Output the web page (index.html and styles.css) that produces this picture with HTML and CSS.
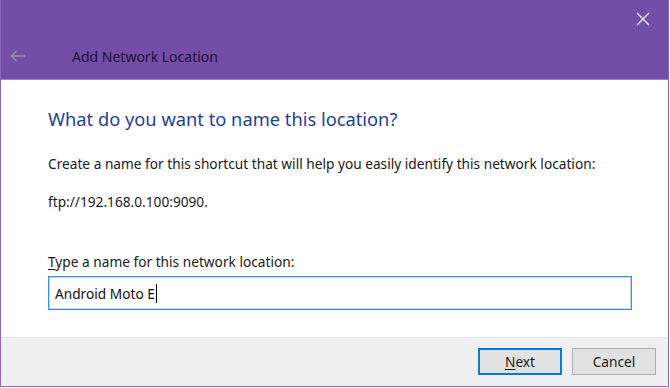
FILE: index.html
```html
<!DOCTYPE html>
<html>
<head>
<meta charset="utf-8">
<link rel="stylesheet" href="styles.css">
</head>
<body>
<div class="window">
  <div class="titlebar">
    <div class="close-row">
      <span class="close-btn">
        <svg width="14" height="14" viewBox="0 0 14 14"><path d="M1 1L13 13M13 1L1 13" stroke="#f2eefa" stroke-width="1.3" fill="none"/></svg>
      </span>
    </div>
    <div class="nav-row">
      <span class="back-btn">
        <svg width="16" height="12" viewBox="0 0 16 12"><path d="M15 6H1.5M6.5 1L1.5 6L6.5 11" stroke="#9a90a8" stroke-width="1.3" fill="none"/></svg>
      </span>
      <span class="title">Add Network Location</span>
    </div>
  </div>
  <div class="content">
    <h1 class="main-instr">What do you want to name this location?</h1>
    <p class="text desc">Create a name for this shortcut that will help you easily identify this network location:</p>
    <p class="text url">ftp://192.168.0.100:9090.</p>
    <label class="text label"><span class="ul">T</span>ype a name for this network location:</label>
    <div class="input"><span class="value">Android Moto E</span><span class="caret"></span></div>
  </div>
  <div class="footer">
    <button class="btn btn-default"><span class="ul">N</span>ext</button>
    <button class="btn">Cancel</button>
  </div>
</div>
</body>
</html>
```
FILE: styles.css
```css
html, body {
  margin: 0;
  padding: 0;
  background: #ffffff;
}
body {
  font-family: "Noto Sans", "Open Sans", sans-serif;
  width: 670px;
  height: 388px;
  overflow: hidden;
}
.window {
  width: 669px;
  height: 387px;
  box-sizing: border-box;
  border-left: 1px solid #8a67bd;
  border-right: 1px solid #8a67bd;
  border-bottom: 1px solid #8a67bd;
  display: flex;
  flex-direction: column;
  background: #ffffff;
}
.titlebar {
  height: 79px;
  background: #744da9;
  border-bottom: 1px solid #9c82c6;
  display: flex;
  flex-direction: column;
}
.close-row {
  display: flex;
  justify-content: flex-end;
  height: 38px;
}
.close-btn {
  width: 46px;
  display: flex;
  align-items: center;
  justify-content: center;
  padding-right: 2px;
  height: 38px;
}
.nav-row {
  display: flex;
  align-items: center;
  height: 36px;
}
.back-btn {
  width: 71px;
  padding-left: 9px;
  box-sizing: border-box;
  display: flex;
  align-items: center;
}
.title {
  font-size: 14px;
  color: #1b1330;
}
.content {
  flex: 1;
  padding: 0 0 0 47px;
  display: flex;
  flex-direction: column;
}
.main-instr {
  margin: 27px 0 0 0;
  font-weight: normal;
  font-size: 18.3px;
  line-height: 24px;
  color: #1e3ea0;
}
.text {
  font-size: 13.7px;
  color: #1a1a1a;
  line-height: 18px;
}
.desc {
  margin: 24px 0 0 0;
}
.url {
  margin: 20px 0 0 0;
}
.label {
  margin-top: 42px;
  display: block;
}
.ul {
  text-decoration: underline;
  text-underline-offset: 2px;
}
.input {
  margin-top: 5px;
  width: 584px;
  height: 34px;
  box-sizing: border-box;
  border: 1px solid #3b8ee0;
  box-shadow: inset 0 0 0 0.5px #7ab6ea;
  display: flex;
  align-items: center;
  padding-left: 6px;
  font-size: 13.7px;
  color: #111;
}
.caret {
  width: 1px;
  height: 19px;
  background: #000;
  margin-left: 1px;
}
.footer {
  height: 49px;
  background: #efefef;
  border-top: 1px solid #e3e3e3;
  display: flex;
  justify-content: flex-end;
  align-items: flex-start;
  padding: 10px 12px 0 0;
  gap: 10px;
  box-sizing: border-box;
}
.btn {
  width: 84px;
  height: 27px;
  background: #e1e1e1;
  border: 1px solid #adadad;
  font-family: "Noto Sans", "Open Sans", sans-serif;
  font-size: 13.7px;
  color: #1a1a1a;
  padding: 0;
  margin: 0;
}
.btn-default {
  border: 2px solid #0a78d4;
}
```
